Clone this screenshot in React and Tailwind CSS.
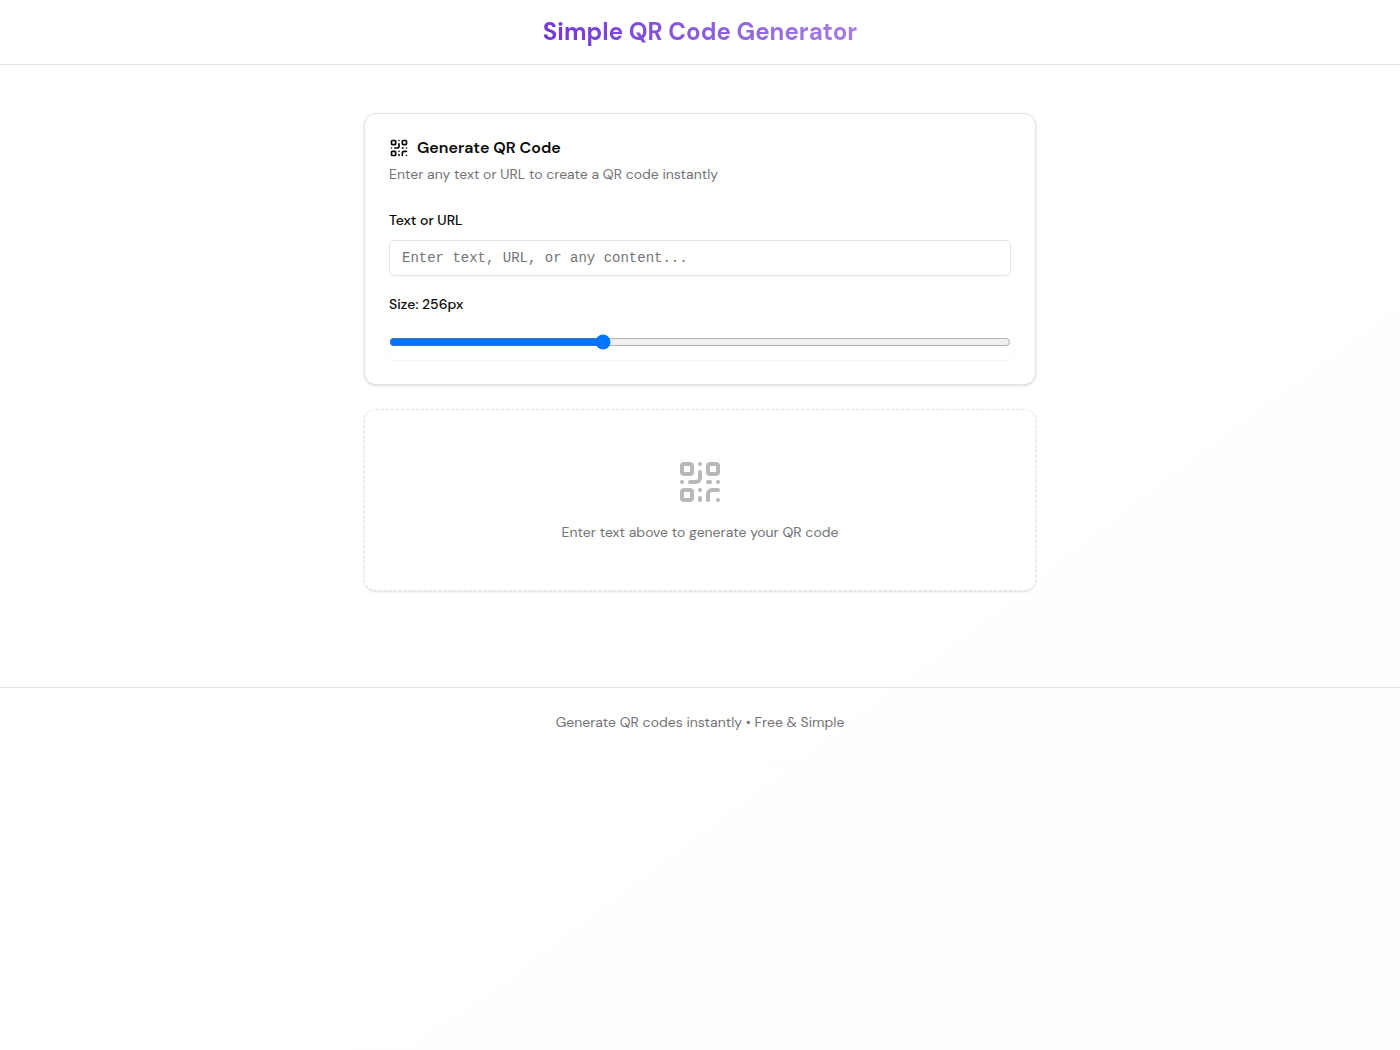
import { useState } from "react";
import { QrCode } from "lucide-react";

export default function App() {
  const [text, setText] = useState("");
  const [size, setSize] = useState(256);
  return (
    <div className="min-h-screen bg-gradient-to-br from-white from-50% to-[#fdfdfd] font-['DM_Sans','Open_Sans',sans-serif] text-[#0a0a0a]">
      <header className="border-b border-[#e4e4e7] bg-white px-4 py-4">
        <h1 className="mx-auto w-fit bg-gradient-to-r from-[#7235d6] to-[#a67ee2] bg-clip-text text-2xl font-bold text-transparent">
          Simple QR Code Generator
        </h1>
      </header>
      <main className="mx-auto flex w-full max-w-[704px] flex-col gap-6 px-4 pt-12 pb-24">
        <section className="rounded-xl border border-[#e4e4e7] bg-white p-6 shadow-sm">
          <h2 className="flex items-center gap-2 text-base leading-5 font-semibold">
            <QrCode className="size-5" />
            Generate QR Code
          </h2>
          <p className="mt-1.5 text-sm text-[#737378]">Enter any text or URL to create a QR code instantly</p>
          <label htmlFor="content" className="mt-6 block text-sm leading-6 font-medium">Text or URL</label>
          <input
            id="content"
            value={text}
            onChange={(e) => setText(e.target.value)}
            placeholder="Enter text, URL, or any content..."
            className="mt-2 block h-9 w-full rounded-md border border-[#e4e4e7] px-3 font-['Liberation_Mono',monospace] text-sm shadow-xs placeholder:text-[#737378]"
          />
          <label htmlFor="size" className="mt-4 block text-sm leading-6 font-medium">Size: {size}px</label>
          <input
            id="size"
            type="range"
            min="128"
            max="504"
            value={size}
            onChange={(e) => setSize(Number(e.target.value))}
            className="mt-2 block h-9 w-full rounded-md shadow-xs"
          />
        </section>
        <section className="flex flex-col items-center gap-4 rounded-xl border border-dashed border-[#e4e4e7] bg-white px-6 py-12 shadow-sm">
          <QrCode className="size-12 text-[#b9b9bb]" />
          <p className="text-sm text-[#737378]">Enter text above to generate your QR code</p>
        </section>
      </main>
      <footer className="border-t border-[#e4e4e7] px-4 py-6 text-center text-sm text-[#737378]">
        Generate QR codes instantly • Free &amp; Simple
      </footer>
    </div>
  );
}
